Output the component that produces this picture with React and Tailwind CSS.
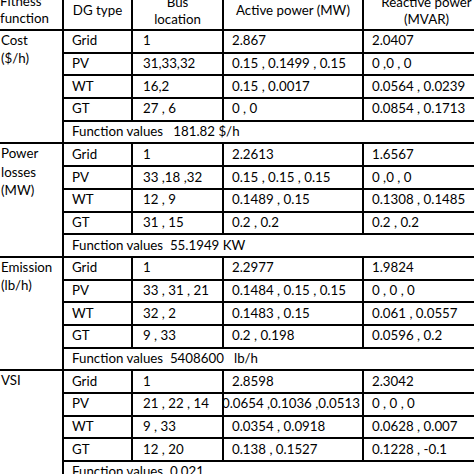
const sections = [
  {
    name: ['Cost', '($/h)'],
    rows: [
      ['Grid', '1', '2.867', '2.0407'],
      ['PV', '31,33,32', '0.15 , 0.1499 , 0.15', '0 ,0 , 0'],
      ['WT', '16,2', '0.15 , 0.0017', '0.0564 , 0.0239'],
      ['GT', '27 , 6', '0 , 0', '0.0854 , 0.1713'],
    ],
    fn: 'Function values   181.82 $/h',
  },
  {
    name: ['Power', 'losses', '(MW)'],
    rows: [
      ['Grid', '1', '2.2613', '1.6567'],
      ['PV', '33 ,18 ,32', '0.15 , 0.15 , 0.15', '0 ,0 , 0'],
      ['WT', '12 , 9', '0.1489 , 0.15', '0.1308 , 0.1485'],
      ['GT', '31 , 15', '0.2 , 0.2', '0.2 , 0.2'],
    ],
    fn: 'Function values  55.1949 KW',
  },
  {
    name: ['Emission', '(lb/h)'],
    rows: [
      ['Grid', '1', '2.2977', '1.9824'],
      ['PV', '33 , 31 , 21', '0.1484 , 0.15 , 0.15', '0 , 0 , 0'],
      ['WT', '32 , 2', '0.1483 , 0.15', '0.061 , 0.0557'],
      ['GT', '9 , 33', '0.2 , 0.198', '0.0596 , 0.2'],
    ],
    fn: 'Function values  5408600   lb/h',
  },
  {
    name: ['VSI'],
    rows: [
      ['Grid', '1', '2.8598', '2.3042'],
      ['PV', '21 , 22 , 14', '0.0654 ,0.1036 ,0.0513', '0 , 0 , 0'],
      ['WT', '9 , 33', '0.0354 , 0.0918', '0.0628 , 0.007'],
      ['GT', '12 , 20', '0.138 , 0.1527', '0.1228 , -0.1'],
    ],
    fn: 'Function values  0.021',
  },
]

const cell = 'border-2 border-black h-[22.7px] p-0 align-middle whitespace-nowrap'

export default function App() {
  return (
    <div
      className="w-[474px] h-[474px] overflow-hidden bg-white text-black text-[13.3px]"
      style={{ fontFamily: 'Lato, "Open Sans", sans-serif' }}
    >
      <table className="border-collapse table-fixed w-[489px] mt-[-10px]">
        <colgroup>
          <col className="w-[63px]" />
          <col className="w-[69px]" />
          <col className="w-[91px]" />
          <col className="w-[140px]" />
          <col className="w-[126px]" />
        </colgroup>
        <thead>
          {/* Header */}
          <tr>
            <th className="border-r-2 border-b-2 border-black h-[39px] p-0 text-left font-normal leading-[17px] align-middle">
              Fitness<br />function
            </th>
            <th className="border-2 border-black p-0 font-normal text-center">DG type</th>
            <th className="border-2 border-black p-0 font-normal text-center leading-[17px]">
              Bus<br />location
            </th>
            <th className="border-2 border-black p-0 font-normal text-center">Active power (MW)</th>
            <th className="border-2 border-black border-r-0 p-0 font-normal text-center leading-[17px]">
              Reactive power<br />(MVAR)
            </th>
          </tr>
        </thead>
        <tbody>
          {sections.map((s) => [
            ...s.rows.map((r, i) => (
              <tr key={s.name[0] + r[0]}>
                {i === 0 && (
                  <td
                    rowSpan={5}
                    className="border-r-2 border-b-2 border-black p-0 pl-[1px] align-top leading-[18.3px]"
                  >
                    {s.name.map((n) => (
                      <div key={n}>{n}</div>
                    ))}
                  </td>
                )}
                <td className={cell + ' pl-[8px]'}>{r[0]}</td>
                <td className={cell + ' pl-[10px]'}>{r[1]}</td>
                <td className={cell + (r[2].length > 20 ? ' pl-0' : ' pl-[8px]')}>
                  {r[2].length > 20 ? <span className="ml-[-2px]">{r[2]}</span> : r[2]}
                </td>
                <td className={cell + ' pl-[8px] border-r-0'}>{r[3]}</td>
              </tr>
            )),
            <tr key={s.name[0] + 'fn'}>
              <td colSpan={4} className={cell + ' pl-[8px] border-r-0 whitespace-pre'}>
                {s.fn}
              </td>
            </tr>,
          ])}
        </tbody>
      </table>
    </div>
  )
}
